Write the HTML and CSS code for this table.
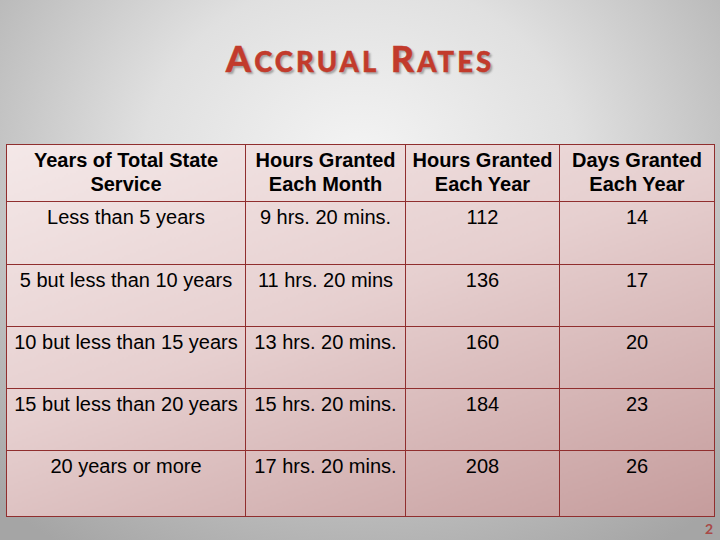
FILE: index.html
```html
<!DOCTYPE html>
<html>
<head>
<meta charset="utf-8">
<link rel="stylesheet" href="styles.css">
</head>
<body>
<div class="slide">
  <header class="title-area">
    <h1 class="title">A<span class="sc">ccrual</span> R<span class="sc">ates</span></h1>
  </header>
  <table class="rates">
    <colgroup>
      <col class="c1"><col class="c2"><col class="c3"><col class="c4">
    </colgroup>
    <thead>
      <tr class="head">
        <th>Years of Total State Service</th>
        <th>Hours Granted Each Month</th>
        <th>Hours Granted Each Year</th>
        <th>Days Granted Each Year</th>
      </tr>
    </thead>
    <tbody>
      <tr class="first"><td>Less than 5 years</td><td>9 hrs. 20 mins.</td><td>112</td><td>14</td></tr>
      <tr><td>5 but less than 10 years</td><td>11 hrs. 20 mins</td><td>136</td><td>17</td></tr>
      <tr><td>10 but less than 15 years</td><td>13 hrs. 20 mins.</td><td>160</td><td>20</td></tr>
      <tr><td>15 but less than 20 years</td><td>15 hrs. 20 mins.</td><td>184</td><td>23</td></tr>
      <tr class="last"><td>20 years or more</td><td>17 hrs. 20 mins.</td><td>208</td><td>26</td></tr>
    </tbody>
  </table>
  <footer class="footer"><span class="page-num">2</span></footer>
</div>
</body>
</html>
```

FILE: styles.css
```css
html, body {
  margin: 0;
  padding: 0;
}
body {
  width: 720px;
  height: 540px;
  overflow: hidden;
}
.slide {
  width: 720px;
  height: 540px;
  box-sizing: border-box;
  background: radial-gradient(ellipse 75% 85% at 50% 30%, #f4f4f4 0%, #e0e0e0 40%, #bbbbbb 75%, #a5a5a5 100%);
  display: flex;
  flex-direction: column;
  padding: 0 6px;
}
.title-area {
  height: 144px;
  display: flex;
  justify-content: center;
  box-sizing: border-box;
  padding-top: 37px;
}
.title {
  margin: 0;
  font-family: "Lato", "Open Sans", sans-serif;
  font-weight: 900;
  font-size: 36px;
  line-height: 42px;
  color: #c23b2c;
  letter-spacing: 3px;
  -webkit-text-stroke: 0.4px #c23b2c;
  text-shadow: 2px 2px 2px rgba(60, 60, 60, 0.4);
}
.sc {
  font-size: 27.5px;
  text-transform: uppercase;
}
.rates {
  width: 708px;
  border-collapse: collapse;
  table-layout: fixed;
  font-family: "Liberation Sans", Arial, sans-serif;
  font-size: 20px;
  line-height: 24px;
  color: #000;
  background: linear-gradient(160deg, #f4e8e8 0%, #e6cfcf 45%, #c59c9c 100%);
}
.c1 { width: 239px; }
.c2 { width: 160px; }
.c3 { width: 154px; }
.c4 { width: 155px; }
.rates th, .rates td {
  border: 1px solid #902e2e;
  text-align: center;
  vertical-align: top;
  padding: 3px 2px 0;
}
.rates th {
  font-weight: 700;
  height: 53px;
}
.rates td {
  height: 58px;
}
.rates tr.first td {
  height: 59px;
}
.rates tr.last td {
  height: 62px;
}
.footer {
  flex: 1;
  display: flex;
  justify-content: flex-end;
  align-items: flex-end;
}
.page-num {
  font-family: "Lato", "Open Sans", sans-serif;
  font-weight: 700;
  font-size: 14px;
  line-height: 16px;
  color: #a84a48;
  padding: 0 1px 3px 0;
}
```
